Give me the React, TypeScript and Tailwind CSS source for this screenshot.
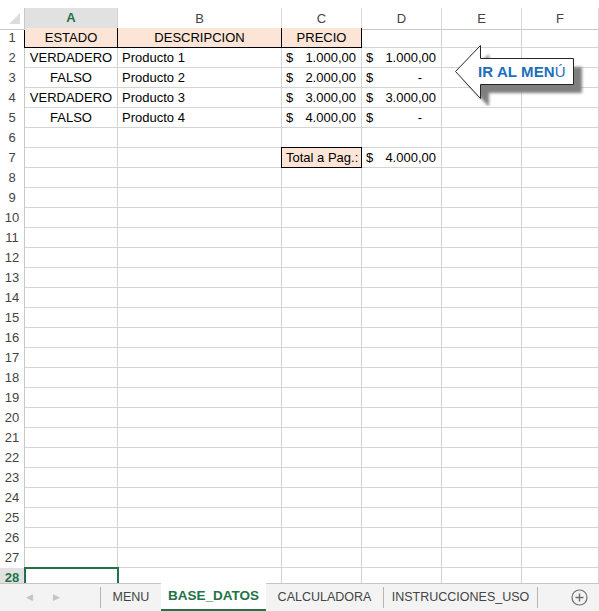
import React from 'react'

type Cell = {
  text?: string
  align?: 'left' | 'center'
  money?: string
  peach?: boolean
}

const cols = ['A', 'B', 'C', 'D', 'E', 'F']
const gridCols = 'grid grid-cols-[25px_93px_164px_80px_80px_80px_77px]'

const data: Record<number, Cell[]> = {
  1: [
    { text: 'ESTADO', align: 'center', peach: true },
    { text: 'DESCRIPCION', align: 'center', peach: true },
    { text: 'PRECIO', align: 'center', peach: true },
  ],
  2: [
    { text: 'VERDADERO', align: 'center' },
    { text: 'Producto 1' },
    { money: '1.000,00' },
    { money: '1.000,00' },
  ],
  3: [{ text: 'FALSO', align: 'center' }, { text: 'Producto 2' }, { money: '2.000,00' }, { money: '-' }],
  4: [
    { text: 'VERDADERO', align: 'center' },
    { text: 'Producto 3' },
    { money: '3.000,00' },
    { money: '3.000,00' },
  ],
  5: [{ text: 'FALSO', align: 'center' }, { text: 'Producto 4' }, { money: '4.000,00' }, { money: '-' }],
  7: [{}, {}, { text: 'Total a Pag.:', peach: true }, { money: '4.000,00' }],
}

const rows = Array.from({ length: 28 }, (_, i) => i + 1)

const CellView = ({ cell, selected }: { cell?: Cell; selected?: boolean }) => {
  const base = 'h-[20px] border-r border-b border-[#d4d4d4] flex items-center text-[13px] text-black overflow-visible whitespace-nowrap'
  if (selected) {
    return <div className={`${base} outline-2 outline-[#217346] -outline-offset-1`} />
  }
  if (!cell) return <div className={base} />
  const peach = cell.peach
    ? 'bg-[#fce4d6] border-black shadow-[0_-1px_0_#000,-1px_0_0_#000,-1px_-1px_0_#000]'
    : ''
  if (cell.money) {
    return (
      <div className={`${base} justify-between pl-[4px] ${cell.money === '-' ? 'pr-[19px]' : 'pr-[5px]'}`}>
        <span>$</span>
        <span>{cell.money}</span>
      </div>
    )
  }
  return (
    <div className={`${base} ${peach} ${cell.align === 'center' ? 'justify-center' : 'pl-[4px]'}`}>
      {cell.text}
    </div>
  )
}

const MenuArrow = () => (
  <div className="absolute left-[450px] top-[40px] w-[135px] h-[66px]">
    <svg width="135" height="66" viewBox="0 0 135 66" className="absolute inset-0">
      <defs>
        <filter id="blur" x="-10%" y="-10%" width="130%" height="130%">
          <feGaussianBlur stdDeviation="1.5" />
        </filter>
      </defs>
      <polygon
        points="10,36 35,10 35,23 128,23 128,49 35,49 35,63"
        fill="#7f7f7f"
        filter="url(#blur)"
        transform="translate(4,4)"
      />
      <polygon
        points="5.5,31.5 30.5,5.5 30.5,18.5 123.5,18.5 123.5,44.5 30.5,44.5 30.5,58.5"
        fill="#ffffff"
        stroke="#262626"
        strokeWidth="1"
      />
    </svg>
    <div className="absolute left-[28px] top-[22px] h-[20px] flex items-center text-[15px] font-bold text-[#1d6fbd] tracking-[0.1px]">
      IR AL MEN<span className="font-normal">Ú</span>
    </div>
  </div>
)

const TabBar = () => (
  <div className="h-[28px] bg-[#f3f3f3] border-t border-[#c6c6c6] flex items-stretch text-[12.5px] text-[#444]">
    <div className="w-[100px] flex items-center">
      <span className="ml-[26px] text-[#c4c4c4] text-[9px]">◀</span>
      <span className="ml-[20px] text-[#c4c4c4] text-[9px]">▶</span>
    </div>
    <div className="w-px bg-[#b5b5b5] my-[3px]" />
    <div className="w-[60px] flex items-center justify-center">MENU</div>
    <div className="-mt-px w-[105px] bg-white border-b-2 border-[#217346] flex items-center justify-center font-bold text-[#217346] text-[13.5px]">
      BASE_DATOS
    </div>
    <div className="w-[117px] flex items-center justify-center">CALCULADORA</div>
    <div className="w-px bg-[#b5b5b5] my-[3px]" />
    <div className="w-[153px] flex items-center justify-center">INSTRUCCIONES_USO</div>
    <div className="w-px bg-[#b5b5b5] my-[3px]" />
    <div className="flex-1 flex items-center justify-end pr-[11px]">
      <svg width="17" height="17" viewBox="0 0 17 17">
        <circle cx="8.5" cy="8.5" r="7.5" fill="none" stroke="#6f6f6f" strokeWidth="1.2" />
        <path d="M8.5 4.5v8M4.5 8.5h8" stroke="#6f6f6f" strokeWidth="1.4" />
      </svg>
    </div>
  </div>
)

export default function App() {
  return (
    <div className="relative w-[599px] h-[611px] overflow-hidden bg-white font-['Liberation_Sans',Arial,sans-serif] flex flex-col">
      <div className="h-[8px] shrink-0" />
      <div className={`${gridCols} h-[20px] shrink-0`}>
        <div className="border-r border-b border-[#c8c8c8] relative">
          <svg width="24" height="19" className="absolute inset-0">
            <polygon points="20,5 20,16 9,16" fill="#dcdcdc" />
          </svg>
        </div>
        {cols.map((c) =>
          c === 'A' ? (
            <div
              key={c}
              className="border-r border-[#d4d4d4] border-b-2 border-b-[#217346] bg-[#e1e1e1] flex items-center justify-center text-[13px] font-bold text-[#217346]"
            >
              {c}
            </div>
          ) : (
            <div
              key={c}
              className="border-r border-[#dadada] border-b border-b-[#c8c8c8] flex items-center justify-center text-[13px] text-[#444]"
            >
              {c}
            </div>
          )
        )}
      </div>
      <div className="flex-1 overflow-hidden">
        {rows.map((r) => {
          const cells = data[r] || []
          return (
            <div key={r} className={`${gridCols} h-[20px]`}>
              <div
                className={`h-[20px] border-r border-[#c8c8c8] flex items-center justify-center text-[13px] ${
                  r === 28 ? 'bg-[#e1e1e1] text-[#217346] font-bold' : 'text-[#444]'
                }`}
              >
                {r}
              </div>
              {cols.map((c, i) => (
                <CellView key={c} cell={cells[i]} selected={r === 28 && c === 'A'} />
              ))}
            </div>
          )
        })}
      </div>
      <TabBar />
      <MenuArrow />
    </div>
  )
}
